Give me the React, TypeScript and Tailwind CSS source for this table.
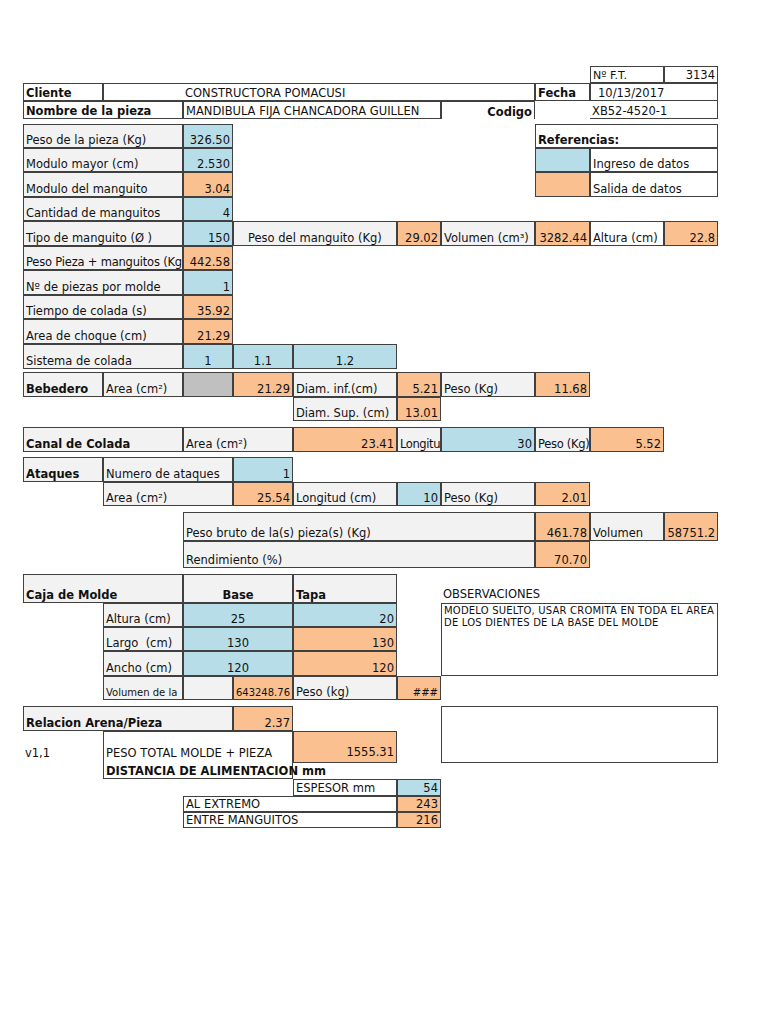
import type { ReactNode } from 'react'

const G = 'bg-[#f2f2f2]'
const B = 'bg-[#b7dee8]'
const O = 'bg-[#fac090]'
const W = 'bg-white'

interface CellProps {
  at: string
  bg?: string
  align?: 'l' | 'r' | 'c'
  bold?: boolean
  border?: string
  cls?: string
  children?: ReactNode
}

function Cell({ at, bg = W, align = 'l', bold, border = 'border', cls = '', children }: CellProps) {
  const j = align === 'r' ? 'justify-end' : align === 'c' ? 'justify-center' : 'justify-start'
  return (
    <div
      className={`${at} ${bg} ${border} border-[#404040] flex items-end ${j} px-[2px] pb-[1px] whitespace-pre overflow-hidden leading-none ${bold ? 'font-bold' : ''} ${cls}`}
    >
      {children}
    </div>
  )
}

export default function App() {
  return (
    <div className="min-h-[1024px] bg-white pt-[66px] pl-[23px] font-['DejaVu_Sans',sans-serif] text-[11.5px] text-[#111]">
      <div className="grid grid-cols-[80px_80px_50px_60px_104px_44px_94px_55px_74px_54px] grid-rows-[17px_18px_18px_5px_24px_24px_25px_24px_25px_24px_25px_24px_25px_25px_3px_25px_24px_6px_25px_5px_25px_24px_6px_29px_27px_6px_29px_24px_24px_25px_24px_6px_25px_32px_16px_17px_16px_16px] w-[695px]">
        {/* cabecera */}
        <Cell at="col-start-9 row-start-1" cls="text-[11px]">Nº F.T.</Cell>
        <Cell at="col-start-10 row-start-1" align="r">3134</Cell>

        <Cell at="col-start-1 row-start-2" bold>Cliente</Cell>
        <Cell at="col-start-2 col-span-6 row-start-2" cls="pl-[81px]">CONSTRUCTORA POMACUSI</Cell>
        <Cell at="col-start-8 row-start-2" bold>Fecha</Cell>
        <Cell at="col-start-9 col-span-2 row-start-2" cls="pl-[7px]">10/13/2017</Cell>

        <Cell at="col-start-1 col-span-2 row-start-3" bold>Nombre de la pieza</Cell>
        <Cell at="col-start-3 col-span-4 row-start-3">MANDIBULA FIJA CHANCADORA GUILLEN</Cell>
        <Cell at="col-start-7 row-start-3" align="r" bold border="border-t border-r border-l">Codigo</Cell>
        <Cell at="col-start-9 col-span-2 row-start-3" border="border-r border-b">XB52-4520-1</Cell>

        {/* datos de la pieza */}
        <Cell at="col-start-1 col-span-2 row-start-5" bg={G}>Peso de la pieza (Kg)</Cell>
        <Cell at="col-start-3 row-start-5" bg={B} align="r">326.50</Cell>
        <Cell at="col-start-1 col-span-2 row-start-6" bg={G}>Modulo mayor (cm)</Cell>
        <Cell at="col-start-3 row-start-6" bg={B} align="r">2.530</Cell>
        <Cell at="col-start-1 col-span-2 row-start-7" bg={G}>Modulo del manguito</Cell>
        <Cell at="col-start-3 row-start-7" bg={O} align="r">3.04</Cell>
        <Cell at="col-start-1 col-span-2 row-start-8" bg={G}>Cantidad de manguitos</Cell>
        <Cell at="col-start-3 row-start-8" bg={B} align="r">4</Cell>
        <Cell at="col-start-1 col-span-2 row-start-9" bg={G}>Tipo de manguito (Ø )</Cell>
        <Cell at="col-start-3 row-start-9" bg={B} align="r">150</Cell>
        <Cell at="col-start-4 col-span-2 row-start-9" bg={G} cls="pl-[14px]">Peso del manguito (Kg)</Cell>
        <Cell at="col-start-6 row-start-9" bg={O} align="r">29.02</Cell>
        <Cell at="col-start-7 row-start-9" bg={G}>Volumen (cm³)</Cell>
        <Cell at="col-start-8 row-start-9" bg={O} align="r">3282.44</Cell>
        <Cell at="col-start-9 row-start-9">Altura (cm)</Cell>
        <Cell at="col-start-10 row-start-9" bg={O} align="r">22.8</Cell>
        <Cell at="col-start-1 col-span-2 row-start-10" bg={G} cls="tracking-[-0.2px]">Peso Pieza + manguitos (Kg</Cell>
        <Cell at="col-start-3 row-start-10" bg={O} align="r">442.58</Cell>
        <Cell at="col-start-1 col-span-2 row-start-11" bg={G}>Nº de piezas por molde</Cell>
        <Cell at="col-start-3 row-start-11" bg={B} align="r">1</Cell>
        <Cell at="col-start-1 col-span-2 row-start-12" bg={G}>Tiempo de colada (s)</Cell>
        <Cell at="col-start-3 row-start-12" bg={O} align="r">35.92</Cell>
        <Cell at="col-start-1 col-span-2 row-start-13" bg={G}>Area de choque (cm)</Cell>
        <Cell at="col-start-3 row-start-13" bg={O} align="r">21.29</Cell>
        <Cell at="col-start-1 col-span-2 row-start-14" bg={G}>Sistema de colada</Cell>
        <Cell at="col-start-3 row-start-14" bg={B} align="c">1</Cell>
        <Cell at="col-start-4 row-start-14" bg={B} align="c">1.1</Cell>
        <Cell at="col-start-5 row-start-14" bg={B} align="c">1.2</Cell>

        {/* referencias */}
        <Cell at="col-start-8 col-span-3 row-start-5" bold>Referencias:</Cell>
        <Cell at="col-start-8 row-start-6" bg={B} />
        <Cell at="col-start-9 col-span-2 row-start-6">Ingreso de datos</Cell>
        <Cell at="col-start-8 row-start-7" bg={O} />
        <Cell at="col-start-9 col-span-2 row-start-7">Salida de datos</Cell>

        {/* bebedero */}
        <Cell at="col-start-1 row-start-16" bg={G} bold>Bebedero</Cell>
        <Cell at="col-start-2 row-start-16" bg={G}>Area (cm²)</Cell>
        <Cell at="col-start-3 row-start-16" bg="bg-[#c0c0c0]" />
        <Cell at="col-start-4 row-start-16" bg={O} align="r">21.29</Cell>
        <Cell at="col-start-5 row-start-16" bg={G}>Diam. inf.(cm)</Cell>
        <Cell at="col-start-6 row-start-16" bg={O} align="r">5.21</Cell>
        <Cell at="col-start-7 row-start-16" bg={G}>Peso (Kg)</Cell>
        <Cell at="col-start-8 row-start-16" bg={O} align="r">11.68</Cell>
        <Cell at="col-start-5 row-start-17" bg={G}>Diam. Sup. (cm)</Cell>
        <Cell at="col-start-6 row-start-17" bg={O} align="r">13.01</Cell>

        {/* canal */}
        <Cell at="col-start-1 col-span-2 row-start-19" bg={G} bold>Canal de Colada</Cell>
        <Cell at="col-start-3 col-span-2 row-start-19" bg={G}>Area (cm²)</Cell>
        <Cell at="col-start-5 row-start-19" bg={O} align="r">23.41</Cell>
        <Cell at="col-start-6 row-start-19" bg={G} cls="px-[1px] tracking-[-0.4px]">Longitu</Cell>
        <Cell at="col-start-7 row-start-19" bg={B} align="r">30</Cell>
        <Cell at="col-start-8 row-start-19" bg={G} cls="px-[1px] tracking-[-0.3px]">Peso (Kg)</Cell>
        <Cell at="col-start-9 row-start-19" bg={O} align="r">5.52</Cell>

        {/* ataques */}
        <Cell at="col-start-1 row-start-21" bg={G} bold>Ataques</Cell>
        <Cell at="col-start-2 col-span-2 row-start-21" bg={G}>Numero de ataques</Cell>
        <Cell at="col-start-4 row-start-21" bg={B} align="r">1</Cell>
        <Cell at="col-start-2 col-span-2 row-start-22" bg={G}>Area (cm²)</Cell>
        <Cell at="col-start-4 row-start-22" bg={O} align="r">25.54</Cell>
        <Cell at="col-start-5 row-start-22" bg={G}>Longitud (cm)</Cell>
        <Cell at="col-start-6 row-start-22" bg={B} align="r">10</Cell>
        <Cell at="col-start-7 row-start-22" bg={G}>Peso (Kg)</Cell>
        <Cell at="col-start-8 row-start-22" bg={O} align="r">2.01</Cell>

        {/* peso bruto */}
        <Cell at="col-start-3 col-span-5 row-start-24" bg={G}>Peso bruto de la(s) pieza(s) (Kg)</Cell>
        <Cell at="col-start-8 row-start-24" bg={O} align="r">461.78</Cell>
        <Cell at="col-start-9 row-start-24" bg={G}>Volumen</Cell>
        <Cell at="col-start-10 row-start-24" bg={O} align="r">58751.2</Cell>
        <Cell at="col-start-3 col-span-5 row-start-25" bg={G}>Rendimiento (%)</Cell>
        <Cell at="col-start-8 row-start-25" bg={O} align="r">70.70</Cell>

        {/* caja de molde */}
        <Cell at="col-start-1 col-span-2 row-start-27" bg={G} bold>Caja de Molde</Cell>
        <Cell at="col-start-3 col-span-2 row-start-27" bg={G} bold align="c">Base</Cell>
        <Cell at="col-start-5 row-start-27" bg={G} bold>Tapa</Cell>
        <Cell at="col-start-7 col-span-4 row-start-27" border="border-0" cls="pb-[3px]">OBSERVACIONES</Cell>
        <Cell at="col-start-2 row-start-28" bg={G}>Altura (cm)</Cell>
        <Cell at="col-start-3 col-span-2 row-start-28" bg={B} align="c">25</Cell>
        <Cell at="col-start-5 row-start-28" bg={B} align="r">20</Cell>
        <Cell at="col-start-2 row-start-29" bg={G}>Largo  (cm)</Cell>
        <Cell at="col-start-3 col-span-2 row-start-29" bg={B} align="c">130</Cell>
        <Cell at="col-start-5 row-start-29" bg={O} align="r">130</Cell>
        <Cell at="col-start-2 row-start-30" bg={G}>Ancho (cm)</Cell>
        <Cell at="col-start-3 col-span-2 row-start-30" bg={B} align="c">120</Cell>
        <Cell at="col-start-5 row-start-30" bg={O} align="r">120</Cell>
        <Cell at="col-start-2 row-start-31" bg={G} cls="text-[10px]">Volumen de la</Cell>
        <Cell at="col-start-3 row-start-31" bg={G} />
        <Cell at="col-start-4 row-start-31" bg={O} align="r" cls="text-[10px]">643248.76</Cell>
        <Cell at="col-start-5 row-start-31" bg={G}>Peso (kg)</Cell>
        <Cell at="col-start-6 row-start-31" bg={O} align="r" cls="text-[10px]">###</Cell>

        <div className="col-start-7 col-span-4 row-start-28 row-span-3 border border-[#404040] px-[2px] pt-px text-[10px] leading-[12px] tracking-[0.2px]">
          MODELO SUELTO, USAR CROMITA EN TODA EL AREA
          <br />
          DE LOS DIENTES DE LA BASE DEL MOLDE
        </div>

        {/* relacion y totales */}
        <Cell at="col-start-1 col-span-3 row-start-33" bg={G} bold>Relacion Arena/Pieza</Cell>
        <Cell at="col-start-4 row-start-33" bg={O} align="r">2.37</Cell>
        <div className="col-start-7 col-span-4 row-start-33 row-span-2 border border-[#404040]" />

        <Cell at="col-start-1 row-start-34" border="border-0" cls="pb-[4px]">v1,1</Cell>
        <Cell at="col-start-2 col-span-3 row-start-34" border="border-l border-t border-r" cls="pb-[4px]">PESO TOTAL MOLDE + PIEZA</Cell>
        <Cell at="col-start-5 row-start-34" bg={O} align="r" cls="pb-[4px]">1555.31</Cell>
        <Cell at="col-start-2 col-span-3 row-start-35" border="border-l border-b border-r" bold cls="overflow-visible">
          DISTANCIA DE ALIMENTACION mm
        </Cell>

        <Cell at="col-start-5 row-start-36">ESPESOR mm</Cell>
        <Cell at="col-start-6 row-start-36" bg={B} align="r">54</Cell>
        <Cell at="col-start-3 col-span-3 row-start-37">AL EXTREMO</Cell>
        <Cell at="col-start-6 row-start-37" bg={O} align="r">243</Cell>
        <Cell at="col-start-3 col-span-3 row-start-38">ENTRE MANGUITOS</Cell>
        <Cell at="col-start-6 row-start-38" bg={O} align="r">216</Cell>
      </div>
    </div>
  )
}
